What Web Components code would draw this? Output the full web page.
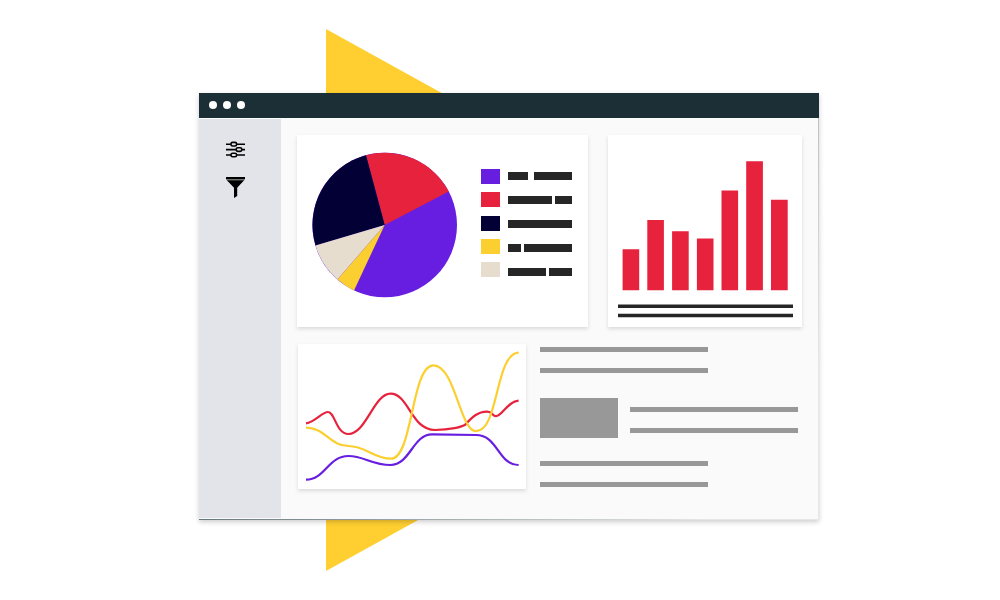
<!DOCTYPE html>
<html lang="en">
<head>
<meta charset="utf-8">
<meta name="viewport" content="width=device-width, initial-scale=1">
<title>Dashboard</title>
<style>
body { margin: 0; background: #fff; font-family: "Liberation Sans", sans-serif; }
</style>
</head>
<body>
<dash-stage>
  <dash-window>
    <dash-sidebar slot="side"></dash-sidebar>
    <dash-row>
      <dash-card style="flex:291"><pie-chart></pie-chart></dash-card>
      <dash-card style="flex:194"><bar-chart></bar-chart></dash-card>
    </dash-row>
    <dash-row style="--gap:14px;--inset:1px">
      <dash-card style="flex:228"><line-chart></line-chart></dash-card>
      <text-summary style="flex:262"></text-summary>
    </dash-row>
  </dash-window>
</dash-stage>
<script>
const define = (name, html) => {
  const template = document.createElement('template');
  template.innerHTML = html;
  customElements.define(name, class extends HTMLElement {
    constructor() {
      super();
      this.attachShadow({ mode: 'open' }).append(template.content.cloneNode(true));
    }
  });
};

define('dash-stage', `
<style>
:host { display: block; position: relative; box-sizing: border-box; min-height: 100vh; padding: 93px 18.1% 80px 19.9%; }
.accent { position: absolute; left: 32.6%; top: 29px; width: 49%; height: 542px; }
.content { position: relative; }
</style>
<svg class="accent" viewBox="0 0 490 542" preserveAspectRatio="none" aria-hidden="true"><path d="M0 0L490 271L0 542z" fill="#ffcf31"/></svg>
<div class="content"><slot></slot></div>`);

define('dash-window', `
<style>
:host { display: block; background: #fafafa; box-shadow: 0 2px 5px rgba(0,0,0,.2); }
header { display: flex; align-items: center; gap: 6px; height: 25px; padding: 0 10px 1px; box-sizing: border-box; background: #1c2f36; }
header i { width: 8px; height: 8px; border-radius: 50%; background: #fff; }
.body { display: flex; border-right: 1px solid; border-bottom: 1px solid; border-image: linear-gradient(125deg, #1c2f36, #6f7f83 35%, #a5adaf 58%, #e6e8e8 88%) 1; }
main { flex: 1; min-width: 0; display: flex; flex-direction: column; gap: 17px; padding: 17px 16px 30px; }
</style>
<header><i></i><i></i><i></i></header>
<div class="body"><slot name="side"></slot><main><slot></slot></main></div>`);

define('dash-sidebar', `
<style>
:host { display: flex; flex-direction: column; align-items: center; gap: 14px; width: 82px; box-sizing: border-box; padding: 19px 9px 0 0; background: #e2e4e9; border-top: 1px solid #fafafa; border-bottom: 1px solid #fafafa; }
button { display: block; width: 24px; height: 24px; padding: 0; border: 0; background: none; }
svg { display: block; }
</style>
<button aria-label="Settings"><svg width="24" height="24" viewBox="224 138 24 24" fill="#e2e4e9" stroke="#000" stroke-width="1.6"><path d="M226 144.2h19M226 149.6h19M226 155h19"/><rect x="231" y="142.4" width="5.6" height="3.6" rx="1.6"/><rect x="236.2" y="147.8" width="5.6" height="3.6" rx="1.6"/><rect x="231" y="153.2" width="5.6" height="3.6" rx="1.6"/></svg></button>
<button aria-label="Filter"><svg width="24" height="24" viewBox="224 176 24 24"><path fill="#999" d="M226 179h19l-1 1.4h-17z"/><path d="M226 177h19v2.2h-19zM226.8 180.3h17.4l-7 7.4v8.3l-3.2 2v-10.3z"/></svg></button>`);

define('dash-row', `
<style>:host { display: flex; gap: var(--gap, 20px); padding-left: var(--inset, 0); }</style><slot></slot>`);

define('dash-card', `
<style>:host { display: block; min-width: 0; background: #fff; box-shadow: 0 2px 4px rgba(0,0,0,.13); }</style><slot></slot>`);

define('pie-chart', `
<style>
:host { display: flex; align-items: flex-start; gap: 8px; padding: 17px 16px 0 15px; }
svg { flex: none; margin-right: 15px; }
.keys, .labels { display: flex; flex-direction: column; }
.keys { justify-content: space-between; width: 19px; height: 108px; margin-top: 17px; }
.keys i { height: 15px; background: var(--c); }
.labels { flex: 1; gap: 16px; margin-top: 20px; }
.labels div { display: flex; gap: 3px; height: 8px; }
.labels b { background: #262626; flex: var(--w); }
</style>
<svg width="146" height="146" viewBox="312 152 146 146" role="img" aria-label="Pie chart">
<circle cx="384.7" cy="225" r="72.3" fill="#681ee0"/>
<path fill="#e6223c" d="M384.7 225L366 155.2A72.3 72.3 0 0 1 448.7 191.5z"/>
<path fill="#030035" d="M384.7 225L315.5 245.5A72.3 72.3 0 0 1 366 155.2z"/>
<path fill="#e7ddcf" d="M384.7 225L337.5 279.5A72 72 0 0 1 315.5 245.5z"/>
<path fill="#fccf30" d="M384.7 225L354 290.4A72.3 72.3 0 0 1 337.5 279.5z"/>
</svg>
<div class="keys"><i style="--c:#681ee0"></i><i style="--c:#e6223c"></i><i style="--c:#030035"></i><i style="--c:#fccf30"></i><i style="--c:#e7ddcf"></i></div>
<div class="labels">
<div style="gap:6px"><b style="--w:20"></b><b style="--w:38"></b></div>
<div><b style="--w:44"></b><b style="--w:17"></b></div>
<div><b style="--w:64"></b></div>
<div><b style="--w:13"></b><b style="--w:48"></b></div>
<div><b style="--w:38"></b><b style="--w:23"></b></div>
</div>`);

define('bar-chart', `
<style>:host, svg { display: block; } svg { width: 100%; }</style>
<svg viewBox="608 135 194 192" role="img" aria-label="Bar chart">
<path fill="#e6223c" d="M622.6 249.3h16.6v41h-16.6zM647.3 219.9h16.6v70.4h-16.6zM672.1 231.3h16.6v59h-16.6zM696.9 238.4h16.6v51.9h-16.6zM721.5 190.4h16.6v99.9h-16.6zM746.2 161.3h16.7v129h-16.7zM771 199.8h16.7v90.5h-16.7z"/>
<path fill="#262626" d="M618 304.4h175v3.6h-175zM618 313.7h175v3.6h-175z"/>
</svg>`);

define('line-chart', `
<style>:host, svg { display: block; } svg { width: 100%; }</style>
<svg viewBox="298 344 228 145" fill="none" stroke-width="2.2" role="img" aria-label="Line chart">
<path stroke="#e6223c" d="M306 423.3C315 422 322 412 328 412C335 412 336 434 348.5 434C366 434 374 393.7 390.5 393.7C409 393.7 411 430 435 430C450 430 462 427 465.5 424.5C472 417 478 411.6 487 411.6C493 411.6 492 416.2 496 416.2C502 416.2 508 401 518.6 400.6"/>
<path stroke="#681ee0" d="M306 479.7C325 479.7 328 456 348.5 456C364 456 372 465 390.5 465C410 465 413 434.3 432 434.3L476 435C498 435 498 465 518.6 465"/>
<path stroke="#fccf30" d="M306 427.7C325 427.7 330 446 348.5 446C366 446 373 458.7 391 458.7C413 458.7 411 365.3 433.5 365.3C455 365.3 460 431.2 476 431.2C499 431.2 495 353.5 518.6 352.7"/>
</svg>`);

define('text-summary', `
<style>
:host { display: block; }
.pair { display: grid; gap: 16px; width: 168px; max-width: 100%; padding-top: 3px; }
.pair i { height: 5px; background: #989898; }
.media { display: flex; align-items: flex-start; gap: 12px; margin: 25px 0 20px; }
.media .pair { padding-top: 9px; }
.thumb { flex: none; width: 78px; height: 40px; background: #989898; }
</style>
<div class="pair"><i></i><i></i></div>
<div class="media"><div class="thumb"></div><div class="pair"><i></i><i></i></div></div>
<div class="pair"><i></i><i></i></div>`);
</script>
</body>
</html>
